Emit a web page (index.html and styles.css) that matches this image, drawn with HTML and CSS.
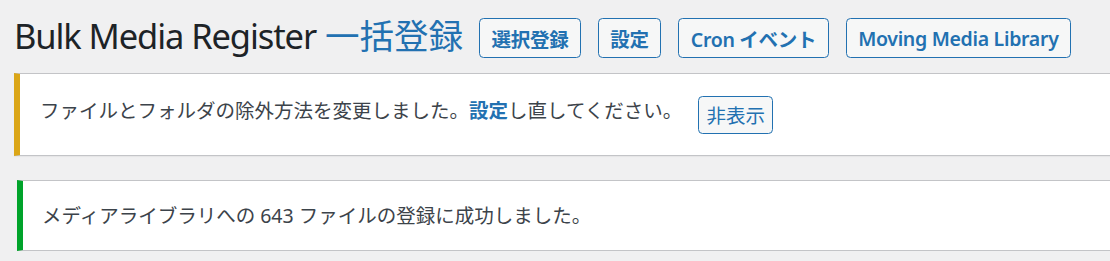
FILE: index.html
```html
<!DOCTYPE html>
<html lang="ja">
<head>
<meta charset="utf-8">
<title>Bulk Media Register</title>
<link rel="stylesheet" href="styles.css">
</head>
<body>
<div class="wrap">
  <div class="page-head">
    <h1 class="page-title"><span class="main">Bulk Media Register</span> <span class="sub">一括登録</span></h1>
    <a class="title-action" href="#">選択登録</a>
    <a class="title-action" href="#">設定</a>
    <a class="title-action" href="#">Cron イベント</a>
    <a class="title-action" href="#">Moving Media Library</a>
  </div>
  <div class="notice notice-warning">
    <p class="notice-text">ファイルとフォルダの除外方法を変更しました。<a class="strong-link" href="#">設定</a>し直してください。</p>
    <button class="dismiss" type="button">非表示</button>
  </div>
  <div class="notice notice-success">
    <p class="notice-text">メディアライブラリへの 643 ファイルの登録に成功しました。</p>
  </div>
</div>
</body>
</html>
```

FILE: styles.css
```css
html, body {
  margin: 0;
  padding: 0;
  background: #f0f0f1;
  overflow: hidden;
}

body {
  font-family: "Noto Sans", "Noto Sans CJK JP", sans-serif;
  color: #3c434a;
}

.wrap {
  margin: 0 -40px 0 14px;
}

.page-head {
  display: flex;
  align-items: flex-start;
  gap: 17px;
  padding-top: 13.5px;
  margin-bottom: 14.5px;
}

.page-title {
  margin: 0 -1px 0 0;
  font-size: 34.5px;
  font-weight: 400;
  line-height: 1.3;
  color: #1d2327;
  white-space: nowrap;
}

.page-title .main {
  letter-spacing: -1.1px;
}

.page-title .sub {
  color: #2271b1;
}

.title-action {
  margin-top: 4.5px;
  box-sizing: border-box;
  height: 40px;
  display: inline-flex;
  align-items: center;
  padding: 0 11.5px;
  border: 1.5px solid #2271b1;
  border-radius: 4.5px;
  background: #f6f7f7;
  color: #2271b1;
  font-size: 19.5px;
  font-weight: 600;
  letter-spacing: -0.3px;
  text-decoration: none;
  white-space: nowrap;
}

.notice {
  display: flex;
  align-items: flex-start;
  background: #fff;
  border: 1px solid #c3c4c7;
  border-left-width: 6px;
  box-shadow: 0 1px 1px rgba(0, 0, 0, 0.04);
}

.notice-warning {
  border-left-color: #dba617;
  padding: 22px 0 21px 20px;
}

.notice-success {
  border-left-color: #00a32a;
  padding: 20px 0 20px 19px;
  margin: 24.5px 0 0 3px;
}

.notice-text {
  margin: 0;
  font-size: 19.5px;
  line-height: 29px;
  white-space: nowrap;
}

.strong-link {
  color: #2271b1;
  font-weight: 700;
  text-decoration: none;
}

.dismiss {
  margin-left: 16px;
  box-sizing: border-box;
  height: 38px;
  padding: 0 7px;
  border: 1.5px solid #2271b1;
  border-radius: 4.5px;
  background: #f6f7f7;
  color: #2271b1;
  font-family: "Noto Sans CJK JP", sans-serif;
  font-size: 19.5px;
  font-weight: 400;
  line-height: 1;
}
```
